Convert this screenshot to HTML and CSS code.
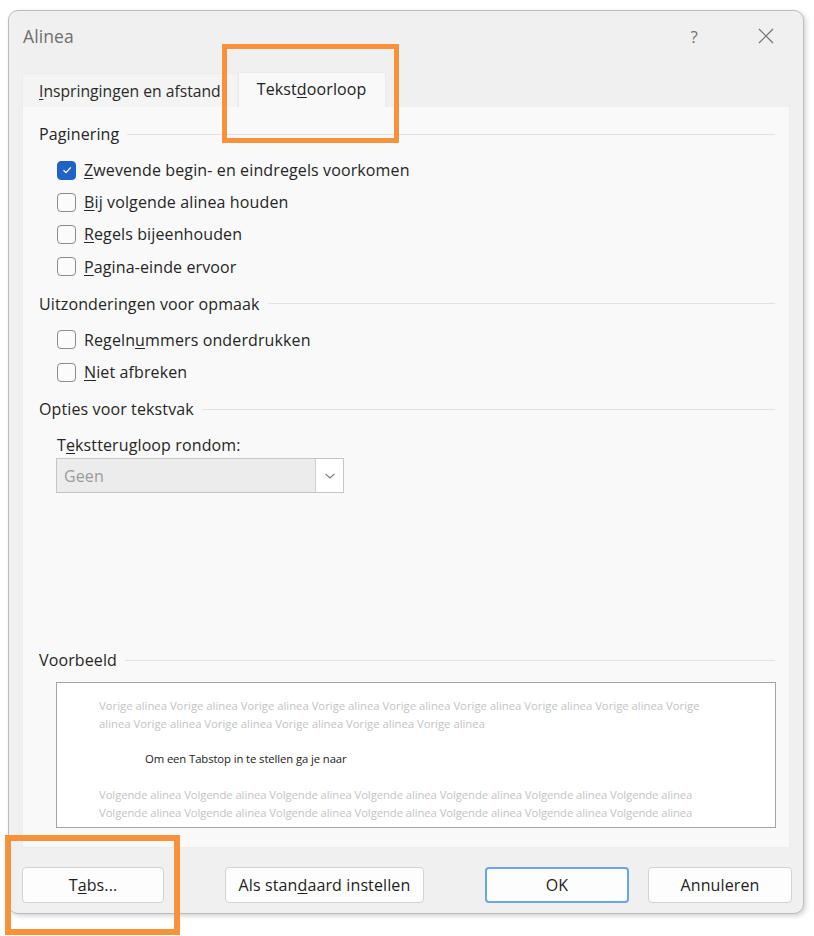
FILE: index.html
```html
<!DOCTYPE html>
<html lang="nl">
<head>
<meta charset="utf-8">
<title>Alinea</title>
<link rel="stylesheet" href="styles.css">
</head>
<body>
<div class="dialog">
  <div class="titlebar">
    <span class="title">Alinea</span>
    <span class="help">?</span>
    <svg class="close" width="16" height="16" viewBox="0 0 16 16"><path d="M1 1 L15 15 M15 1 L1 15" stroke="#707070" stroke-width="1.2" fill="none"/></svg>
  </div>
  <div class="tabs">
    <div class="tab"><u>I</u>nspringingen en afstand</div>
    <div class="tab active">Tekst<u>d</u>oorloop</div>
  </div>
  <div class="panel">
    <div class="group-title first"><span>Paginering</span><i class="rule"></i></div>
    <div class="row"><span class="box checked"><svg width="12" height="12" viewBox="0 0 12 12"><path d="M2.5 6.2 L5 8.6 L9.8 3.4" stroke="#fff" stroke-width="1.3" fill="none"/></svg></span><span><u>Z</u>wevende begin- en eindregels voorkomen</span></div>
    <div class="row"><span class="box"></span><span><u>B</u>ij volgende alinea houden</span></div>
    <div class="row"><span class="box"></span><span><u>R</u>egels bijeenhouden</span></div>
    <div class="row"><span class="box"></span><span><u>P</u>agina-einde ervoor</span></div>

    <div class="group-title"><span>Uitzonderingen voor opmaak</span><i class="rule"></i></div>
    <div class="row"><span class="box"></span><span>Regeln<u>u</u>mmers onderdrukken</span></div>
    <div class="row"><span class="box"></span><span><u>N</u>iet afbreken</span></div>

    <div class="group-title"><span>Opties voor tekstvak</span><i class="rule"></i></div>
    <div class="field-label">T<u>e</u>kstterugloop rondom:</div>
    <div class="select">
      <span class="select-value">Geen</span>
      <span class="select-btn"><svg width="12" height="8" viewBox="0 0 12 8"><path d="M1.5 1.8 L6 6 L10.5 1.8" stroke="#777" stroke-width="1.1" fill="none"/></svg></span>
    </div>

    <div class="group-title preview-title"><span>Voorbeeld</span><i class="rule"></i></div>
    <div class="preview">
      <div class="pline gray">Vorige alinea Vorige alinea Vorige alinea Vorige alinea Vorige alinea Vorige alinea Vorige alinea Vorige alinea Vorige</div>
      <div class="pline gray">alinea Vorige alinea Vorige alinea Vorige alinea Vorige alinea Vorige alinea</div>
      <div class="pline current">Om een Tabstop in te stellen ga je naar</div>
      <div class="pline gray next">Volgende alinea Volgende alinea Volgende alinea Volgende alinea Volgende alinea Volgende alinea Volgende alinea</div>
      <div class="pline gray">Volgende alinea Volgende alinea Volgende alinea Volgende alinea Volgende alinea Volgende alinea Volgende alinea</div>
    </div>
  </div>
  <div class="footer">
    <button class="btn b-tabs">T<u>a</u>bs...</button>
    <button class="btn b-std">Als stan<u>d</u>aard instellen</button>
    <button class="btn b-ok">OK</button>
    <button class="btn b-cancel">Annuleren</button>
  </div>
</div>
<div class="mark mark-tab"></div>
<div class="mark mark-btn"></div>
</body>
</html>
```

FILE: styles.css
```css
html, body {
  margin: 0;
  padding: 0;
  background: #ffffff;
}
body {
  width: 814px;
  height: 936px;
  position: relative;
  overflow: hidden;
  font-family: "Open Sans", "Noto Sans", "DejaVu Sans", sans-serif;
  font-size: 16px;
  letter-spacing: 0.12px;
  color: #262626;
}
u {
  text-decoration: underline;
  text-underline-offset: 2px;
  text-decoration-thickness: 1px;
}
.dialog {
  margin: 10px 0 0 8px;
  width: 794px;
  height: 902px;
  border: 1px solid #bcbcbc;
  border-radius: 10px;
  background: #f0f0f0;
  box-shadow: 2px 2px 5px rgba(0,0,0,0.18);
  display: flex;
  flex-direction: column;
}
.titlebar {
  height: 50px;
  display: flex;
  align-items: center;
  padding-left: 14px;
}
.title {
  color: #6e6e6e;
  font-size: 17.5px;
  flex: 1;
}
.help {
  color: #707070;
  font-size: 17px;
  margin-right: 60px;
}
.close {
  margin-right: 29px;
}
.tabs {
  margin-top: 11px;
  margin-left: 13px;
  display: flex;
  height: 35px;
  align-items: flex-end;
}
.tab {
  flex: none;
  height: 34px;
  box-sizing: border-box;
  padding: 0 16px 0 16px;
  display: flex;
  align-items: center;
  background: #f4f4f4;
  border: 1px solid #ececec;
  border-bottom: none;
  color: #2a2a2a;
  font-size: 15.7px;
  letter-spacing: 0;
  white-space: nowrap;
}
.tab.active {
  height: 35px;
  background: #f9f9f9;
  padding: 0 19px 3px 18px;
  border-color: #ebebeb;
  color: #222;
  font-size: 16px;
  letter-spacing: 0.12px;
}
.panel {
  margin-left: 13px;
  width: 768px;
  height: 741px;
  box-sizing: border-box;
  background: #f9f9f9;
  border: 1px solid #ededed;
  border-top: none;
  padding: 15px 14px 0 16px;
}
.group-title {
  display: flex;
  align-items: center;
  height: 24px;
  margin-top: 9px;
}
.group-title.first {
  margin-top: 0;
}
.rule {
  flex: 1;
  height: 1px;
  background: #e2e2e2;
  margin-left: 8px;
}
.row {
  height: 32.2px;
  display: flex;
  align-items: center;
  margin-left: 18px;
}
.group-title + .row {
  margin-top: 8px;
}
.box {
  width: 17px;
  height: 17px;
  border: 1px solid #8c8c8c;
  border-radius: 4px;
  background: #fbfbfb;
  margin-right: 8px;
  display: flex;
  align-items: center;
  justify-content: center;
  flex: none;
}
.box.checked {
  background: #1f64c4;
  border-color: #1f64c4;
}
.field-label {
  margin-top: 12px;
  margin-left: 18px;
  height: 24px;
  line-height: 24px;
}
.select {
  margin-top: 1px;
  margin-left: 17px;
  width: 288px;
  height: 35px;
  box-sizing: border-box;
  border: 1px solid #c6c6c6;
  background: #ececec;
  display: flex;
  align-items: stretch;
}
.select-value {
  flex: 1;
  color: #9a9a9a;
  padding-left: 7px;
  display: flex;
  align-items: center;
}
.select-btn {
  width: 27px;
  background: #ffffff;
  border-left: 1px solid #d0d0d0;
  display: flex;
  align-items: center;
  justify-content: center;
}
.preview-title {
  margin-top: 155px;
}
.preview {
  margin-top: 10px;
  margin-left: 17px;
  width: 720px;
  height: 146px;
  box-sizing: border-box;
  border: 1px solid #a4a4a4;
  background: #ffffff;
  padding: 14px 0 0 42px;
  font-family: "Open Sans", "Noto Sans", sans-serif;
  font-size: 11.3px;
  letter-spacing: 0;
}
.pline {
  height: 18px;
  line-height: 18px;
  white-space: nowrap;
}
.gray {
  color: #c3c3c3;
}
.current {
  color: #1a1a1a;
  margin-top: 17px;
  padding-left: 46px;
  letter-spacing: -0.1px;
}
.pline.next {
  margin-top: 18px;
  letter-spacing: -0.08px;
}
.pline.next + .pline {
  letter-spacing: -0.08px;
}
.footer {
  margin-top: 19px;
  margin-left: 13px;
  display: flex;
  height: 36px;
}
.btn {
  height: 36px;
  box-sizing: border-box;
  border: 1px solid #d2d2d2;
  border-radius: 4px;
  background: #fdfdfd;
  font-family: "Open Sans", "Noto Sans", sans-serif;
  font-size: 16px;
  letter-spacing: 0.12px;
  color: #1e1e1e;
  padding: 0;
}
.b-tabs { width: 142px; }
.b-std { width: 199px; margin-left: 61px; }
.b-ok { width: 144px; margin-left: 61px; border: 2px solid #6aa6df; }
.b-cancel { width: 144px; margin-left: 19px; }
.mark {
  position: absolute;
  border: 5px solid #f7913a;
  box-sizing: border-box;
}
.mark-tab {
  left: 222px;
  top: 44px;
  width: 177px;
  height: 99px;
}
.mark-btn {
  left: 5px;
  top: 835px;
  width: 175px;
  height: 100px;
  border-width: 6px;
}
```
